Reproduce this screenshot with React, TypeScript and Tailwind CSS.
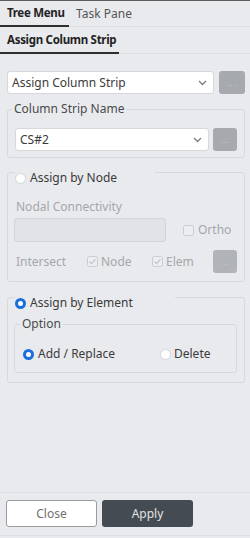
import React from "react";

const Chevron = () => (
  <svg width="9" height="6" viewBox="0 0 9 6" className="shrink-0">
    <path d="M1 1l3.5 3.5L8 1" fill="none" stroke="#7a7c80" strokeWidth="1.3" />
  </svg>
);

const Dots = ({ disabled = false }: { disabled?: boolean }) => (
  <div
    className={`flex items-center justify-center rounded-[3px] ${
      disabled ? "bg-[#b0b3b8]" : "bg-[#a6a9ae]"
    } text-[9px] leading-none tracking-[1px] text-[#c9cbcf] h-full w-full`}
  >
    ...
  </div>
);

const Radio = ({ checked }: { checked: boolean }) =>
  checked ? (
    <span className="inline-block w-[11px] h-[11px] rounded-full border-[3px] border-[#1b6fdc] bg-white shrink-0" />
  ) : (
    <span className="inline-block w-[11px] h-[11px] rounded-full border border-[#d3d5d9] bg-white shrink-0" />
  );

const Check = ({ checked }: { checked: boolean }) => (
  <svg width="11" height="11" viewBox="0 0 11 11" className="shrink-0">
    <rect x="0.5" y="0.5" width="10" height="10" rx="2" fill="#eceef1" stroke="#c9cbcf" />
    {checked && <path d="M2.5 5.6l2 2 4-4.4" fill="none" stroke="#c3c5c9" strokeWidth="1.3" />}
  </svg>
);

export default function App() {
  return (
    <div
      className="w-[250px] h-[538px] bg-[#e9eaee] flex flex-col border-t border-[#5c5c5c] text-[12px] text-[#3b3b3b] overflow-hidden"
      style={{ fontFamily: '"Noto Sans", "Open Sans", sans-serif' }}
    >
      {/* tabs */}
      <div className="flex h-[26px] border-b border-[#dcdee2] shrink-0">
        <div className="w-[69px] pl-[7px] flex items-center whitespace-nowrap text-[11.5px] font-bold tracking-[-0.3px] text-[#222] border-b-2 border-[#2f2f2f] -mb-px">
          Tree Menu
        </div>
        <div className="pl-[7px] flex items-center whitespace-nowrap text-[#555]">Task Pane</div>
      </div>
      <div className="flex h-[27px] border-b border-[#dcdee2] shrink-0">
        <div className="w-[119px] pl-[7px] flex items-center whitespace-nowrap text-[11.5px] font-bold tracking-[-0.3px] text-[#222] border-b-2 border-[#2f2f2f] -mb-px">
          Assign Column Strip
        </div>
      </div>

      {/* content */}
      <div className="flex-1 pl-[7px] pr-[5px] pt-[17px] flex flex-col">
        <div className="flex h-[23px] gap-[5px]">
          <div className="flex-1 flex items-center justify-between bg-white border border-[#d6d8dc] rounded-[3px] pl-[4px] pr-[6px]">
            <span>Assign Column Strip</span>
            <Chevron />
          </div>
          <div className="w-[26px]">
            <Dots />
          </div>
        </div>

        <fieldset className="mt-[8px] border border-[#d6d8dc] rounded-[3px] px-[7px] pb-[6px]">
          <legend className="-ml-[3px] px-[2px] leading-[14px] text-[#4a4a4a]">Column Strip Name</legend>
          <div className="flex h-[23px] gap-[4px] mt-[12px]">
            <div className="flex-1 flex items-center justify-between bg-white border border-[#d6d8dc] rounded-[3px] pl-[4px] pr-[6px]">
              <span>CS#2</span>
              <Chevron />
            </div>
            <div className="w-[24px]">
              <Dots />
            </div>
          </div>
        </fieldset>

        <fieldset className="mt-[1px] border border-[#d6d8dc] rounded-[3px] px-[6px] pb-[8px]">
          <legend className="ml-[1px] pr-[38px] pt-[12px] leading-[14px]">
            <span className="flex items-center gap-[4px] text-[#3b3b3b]">
              <Radio checked={false} />
              Assign by Node
            </span>
          </legend>
          <div className="mt-[15px] leading-[14px] pl-[2px] text-[#a4a7ab]">Nodal Connectivity</div>
          <div className="mt-[4px] flex items-center">
            <div className="w-[152px] h-[24px] bg-[#e2e3e7] border border-[#d2d4d8] rounded-[3px]" />
            <div className="ml-[17px] flex items-center gap-[4px] text-[#a4a7ab]">
              <Check checked={false} />
              Ortho
            </div>
          </div>
          <div className="mt-[8px] h-[23px] flex items-center text-[#a4a7ab]">
            <span className="pl-[2px] w-[73px]">Intersect</span>
            <span className="flex items-center gap-[3px] w-[65px]">
              <Check checked={true} />
              Node
            </span>
            <span className="flex items-center gap-[3px]">
              <Check checked={true} />
              Elem
            </span>
            <div className="ml-auto mr-[1px] w-[24px] h-[23px]">
              <Dots disabled />
            </div>
          </div>
        </fieldset>

        <fieldset className="mt-[2px] border border-[#d6d8dc] rounded-[3px] pl-[6px] pr-[7px] pb-[9px]">
          <legend className="ml-[1px] pr-[42px] pt-[12px] leading-[14px]">
            <span className="flex items-center gap-[4px] text-[#3b3b3b]">
              <Radio checked={true} />
              Assign by Element
            </span>
          </legend>
          <fieldset className="mt-[7px] border border-[#d6d8dc] rounded-[3px] px-[8px] pb-[10px]">
            <legend className="-ml-[3px] px-[2px] leading-[14px] text-[#4a4a4a]">Option</legend>
            <div className="mt-[15px] flex items-center h-[16px]">
              <span className="flex items-center gap-[4px] w-[137px]">
                <Radio checked={true} />
                Add / Replace
              </span>
              <span className="flex items-center gap-[3px]">
                <Radio checked={false} />
                Delete
              </span>
            </div>
          </fieldset>
        </fieldset>
      </div>

      {/* footer */}
      <div className="shrink-0 border-t border-b border-[#dcdee2] pt-[7px] pb-[8px] mb-[2px] px-[6px] flex gap-[5px]">
        <button className="w-[91px] h-[27px] bg-white border border-[#9a9ca0] rounded-[3px] text-[#707070]">
          Close
        </button>
        <button className="w-[91px] h-[27px] bg-[#454b53] rounded-[3px] text-[#e2e2e2]">Apply</button>
      </div>
    </div>
  );
}
